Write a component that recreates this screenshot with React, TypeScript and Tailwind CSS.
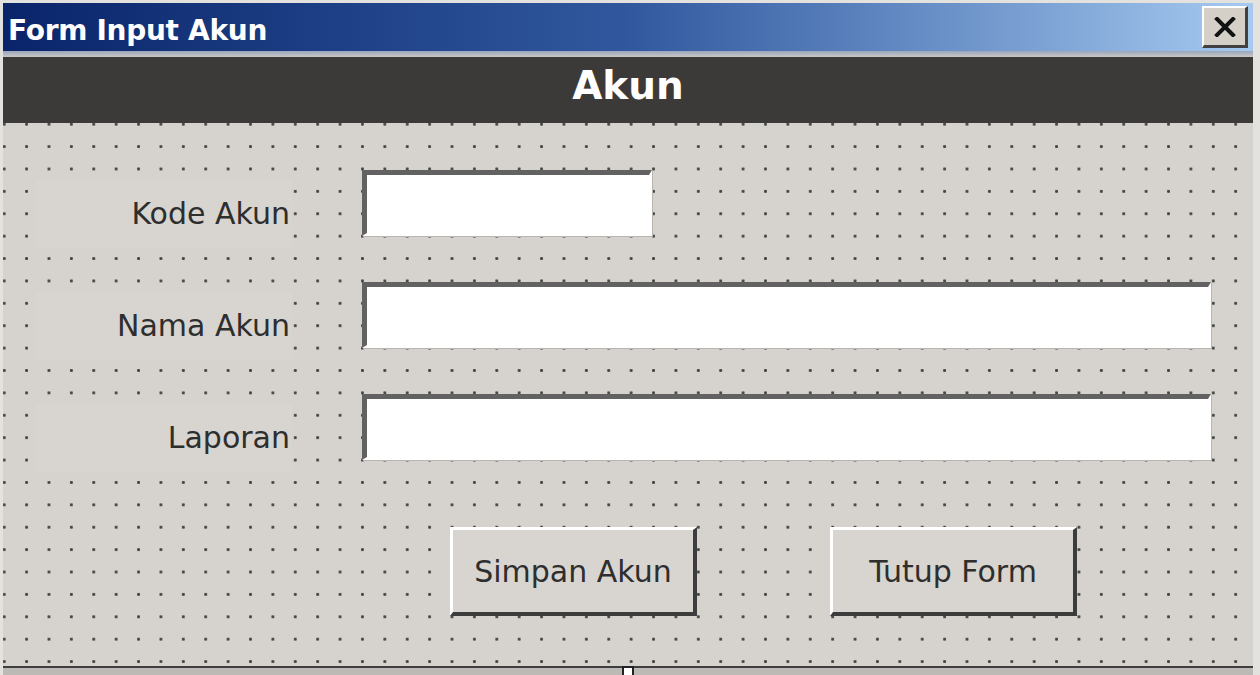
import React from 'react'

const FONT = { fontFamily: '"DejaVu Sans", "Liberation Sans", sans-serif' }

function Field({ label, width }: { label: string; width: string }) {
  return (
    <div className="flex h-[112px] items-start">
      <div className="ml-[33px] mt-[10px] flex h-[68px] w-[256px] items-center justify-end bg-[#d8d5d0] pr-[2px] text-[30px] leading-none text-[#2e2e2e]">
        {label}
      </div>
      <div
        className={`ml-[70px] h-[66px] ${width} border-t-[5px] border-l-[5px] border-r-[3px] border-b-[3px] border-t-[#626262] border-l-[#626262] border-r-white border-b-white bg-white shadow-[1px_1px_0_#b9b6b1]`}
      />
    </div>
  )
}

function Btn({ label }: { label: string }) {
  return (
    <div className="flex h-[89px] w-[247px] items-center justify-center border-t-[3px] border-l-[3px] border-r-[4px] border-b-[4px] border-t-white border-l-white border-r-[#3c3c3c] border-b-[#3c3c3c] bg-[#d8d5d0] pt-[2px] text-[30px] leading-none text-[#2e2e2e]">
      {label}
    </div>
  )
}

export default function App() {
  return (
    <div className="flex h-[675px] w-[1260px] flex-col overflow-hidden bg-[#e4e2de] pl-[3px] pr-[7px] pt-[3px]" style={FONT}>
      {/* title bar */}
      <div className="flex h-[48px] shrink-0 items-start justify-between bg-gradient-to-r from-[#0a246a] via-[#31589e] to-[#a6caf0] pl-[5px] pr-[5px]">
        <span className="mt-[14px] text-[28px] font-bold leading-none tracking-[-0.3px] text-white">Form Input Akun</span>
        <div className="mt-[3px] flex h-[42px] w-[46px] items-center justify-center border-t-2 border-l-2 border-r-[3px] border-b-[3px] border-t-white border-l-white border-r-[#404040] border-b-[#404040] bg-[#d4d0c8]">
          <svg width="22" height="20" viewBox="0 0 22 20">
            <path d="M3 2 L19 18 M19 2 L3 18" stroke="#111" strokeWidth="4" strokeLinecap="square" />
          </svg>
        </div>
      </div>
      <div className="h-[6px] shrink-0 bg-gradient-to-b from-[#9aa6bc] to-[#c9c7c3]" />

      {/* header */}
      <div className="flex h-[66px] shrink-0 items-center justify-center bg-[#3b3a38] pb-[10px]">
        <span className="text-[39px] font-bold leading-none text-white">Akun</span>
      </div>

      {/* form body */}
      <div className="flex h-[543px] shrink-0 flex-col bg-[#d6d3ce] bg-[radial-gradient(circle,#444_1.2px,transparent_1.9px)] bg-[length:22.4px_22.4px] bg-[position:-10px_-10px] pt-[47px]">
        <Field label="Kode Akun" width="w-[290px]" />
        <Field label="Nama Akun" width="w-[849px]" />
        <Field label="Laporan" width="w-[849px]" />
        <div className="mt-[21px] flex gap-[133px] pl-[447px]">
          <Btn label="Simpan Akun" />
          <Btn label="Tutup Form" />
        </div>
      </div>

      {/* bottom edge */}
      <div className="flex h-[9px] shrink-0 border-t-2 border-[#3e3e3e] bg-[#bdbab5] pl-[619px]">
        <div className="-mt-[2px] h-[11px] w-[12px] border-2 border-[#222] bg-white" />
      </div>
    </div>
  )
}
